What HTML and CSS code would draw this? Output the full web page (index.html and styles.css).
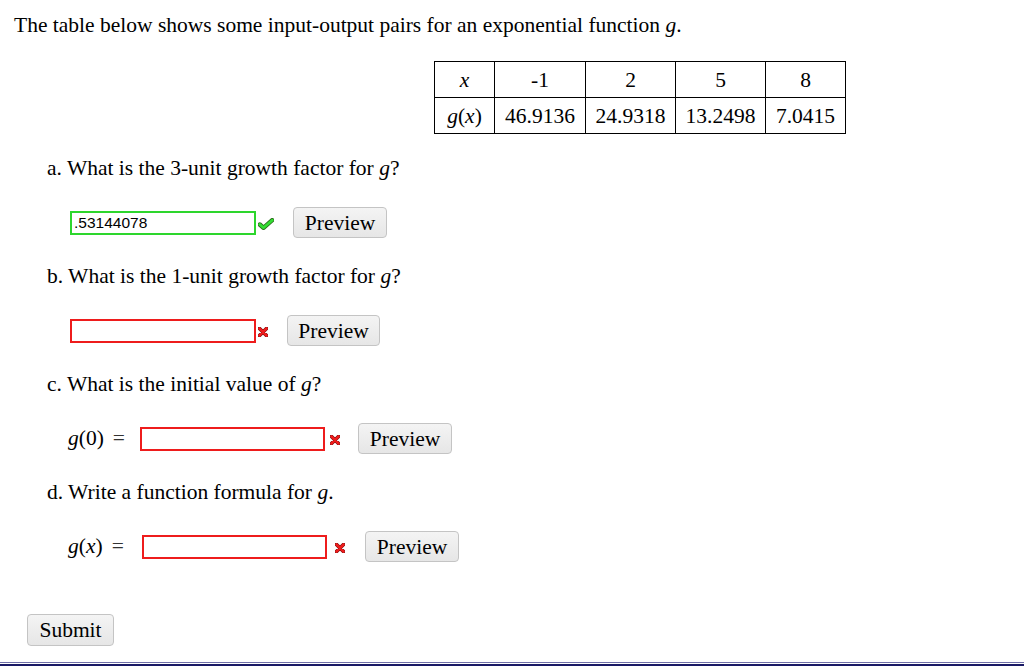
FILE: index.html
```html
<!DOCTYPE html>
<html>
<head>
<meta charset="utf-8">
<link rel="stylesheet" href="styles.css">
</head>
<body>
<div class="page">
  <p class="intro">The table below shows some input-output pairs for an exponential function <i class="m">g</i>.</p>
  <table class="data">
    <tr><td class="hd"><i class="m">x</i></td><td class="c1">-1</td><td class="c2">2</td><td class="c3">5</td><td class="c4">8</td></tr>
    <tr><td class="hd"><i class="m">g</i>(<i class="m">x</i>)</td><td>46.9136</td><td>24.9318</td><td>13.2498</td><td>7.0415</td></tr>
  </table>

  <div class="q">
    <p class="qtext">a. What is the 3-unit growth factor for <i class="m">g</i>?</p>
    <div class="ans">
      <input class="field ok" type="text" value=".53144078">
      <svg class="mark check" width="16" height="12" viewBox="0 0 16 12"><path d="M1.8 6.5 L5.5 9.8 L14.2 2.2" fill="none" stroke="#2a6a1a" stroke-width="4.4" stroke-linecap="round" stroke-linejoin="round"/><path d="M1.8 6.5 L5.5 9.8 L14.2 2.2" fill="none" stroke="#33dd33" stroke-width="2.8" stroke-linecap="round" stroke-linejoin="round"/></svg>
      <button class="btn prev-a">Preview</button>
    </div>
  </div>

  <div class="q">
    <p class="qtext">b. What is the 1-unit growth factor for <i class="m">g</i>?</p>
    <div class="ans">
      <input class="field bad" type="text">
      <svg class="mark cross" width="10" height="10" viewBox="0 0 10 10"><path d="M1.5 1.5 L8.5 8.5 M8.5 1.5 L1.5 8.5" stroke="#6a1010" stroke-width="3.8" stroke-linecap="round"/><path d="M1.5 1.5 L8.5 8.5 M8.5 1.5 L1.5 8.5" stroke="#ee1c1c" stroke-width="2.6" stroke-linecap="round"/></svg>
      <button class="btn prev-b">Preview</button>
    </div>
  </div>

  <div class="q">
    <p class="qtext">c. What is the initial value of <i class="m">g</i>?</p>
    <div class="ans math">
      <span class="lhs"><i class="m">g</i>(0)<span class="eq">=</span></span>
      <input class="field bad f-c" type="text">
      <svg class="mark cross cx" width="10" height="10" viewBox="0 0 10 10"><path d="M1.5 1.5 L8.5 8.5 M8.5 1.5 L1.5 8.5" stroke="#6a1010" stroke-width="3.8" stroke-linecap="round"/><path d="M1.5 1.5 L8.5 8.5 M8.5 1.5 L1.5 8.5" stroke="#ee1c1c" stroke-width="2.6" stroke-linecap="round"/></svg>
      <button class="btn prev-c">Preview</button>
    </div>
  </div>

  <div class="q">
    <p class="qtext">d. Write a function formula for <i class="m">g</i>.</p>
    <div class="ans math">
      <span class="lhs"><i class="m">g</i>(<i class="m">x</i>)<span class="eq">=</span></span>
      <input class="field bad f-d" type="text">
      <svg class="mark cross dx" width="10" height="10" viewBox="0 0 10 10"><path d="M1.5 1.5 L8.5 8.5 M8.5 1.5 L1.5 8.5" stroke="#6a1010" stroke-width="3.8" stroke-linecap="round"/><path d="M1.5 1.5 L8.5 8.5 M8.5 1.5 L1.5 8.5" stroke="#ee1c1c" stroke-width="2.6" stroke-linecap="round"/></svg>
      <button class="btn prev-d">Preview</button>
    </div>
  </div>

  <div class="submit-row"><button class="btn submit">Submit</button></div>
</div>
<div class="rule"></div>
</body>
</html>
```

FILE: styles.css
```css
html, body {
  margin: 0;
  padding: 0;
  background: #fff;
}
body {
  font-family: "Liberation Serif", "Times New Roman", serif;
  font-size: 21.5px;
  color: #000;
}
.page {
  padding: 13px 0 0 14px;
}
.m {
  font-family: "Liberation Serif", serif;
  font-style: italic;
}
.intro {
  margin: 0;
  line-height: 24px;
}
.data {
  border-collapse: collapse;
  margin: 24px 0 0 420px;
  font-size: 21.5px;
}
.data td {
  border: 1px solid #000;
  height: 35px;
  padding: 0;
  text-align: center;
  line-height: 24px;
}
.data td.hd { width: 59px; }
.data td.c1 { width: 90px; }
.data td.c2 { width: 89px; }
.data td.c3 { width: 89px; }
.data td.c4 { width: 79px; }
.q {
  padding-left: 33px;
}
.data + .q { margin-top: 22px; }
.qtext {
  margin: 0;
  line-height: 24px;
  height: 24px;
}
.ans {
  display: flex;
  align-items: center;
  height: 31px;
  margin: 27px 0 26px 23px;
}
.ans.math {
  margin-left: 21px;
}
.field {
  box-sizing: border-box;
  width: 186px;
  height: 24px;
  margin: 0;
  padding: 0 2px;
  font-family: "Liberation Sans", Arial, sans-serif;
  font-size: 15.5px;
  color: #000;
  background: #fff;
  outline: none;
}
.field.ok { border: 2px solid #2dd62d; }
.field.bad { border: 2px solid #ee1c1c; }
.mark { flex: none; }
.check { margin: 2px 0 0 2px; }
.cross { margin: 2px 0 0 2px; }
.btn {
  font-family: "Liberation Serif", "Times New Roman", serif;
  font-size: 21.5px;
  color: #000;
  background: linear-gradient(#f4f4f4, #e6e6e6);
  border: 1px solid #c4c4c4;
  border-radius: 4px;
  height: 31px;
  padding: 0;
  line-height: 28px;
}
.prev-a { margin-left: 19px; width: 94px; }
.prev-b { margin-left: 19px; width: 93px; }
.lhs {
  width: 72px;
  flex: none;
}
.eq { margin-left: 9px; color: #333; }
.f-c { width: 185px; }
.f-d { width: 185px; margin-left: 2px; }
.cx { margin-left: 5px; }
.dx { margin-left: 8px; }
.prev-c { margin-left: 18px; width: 94px; }
.prev-d { margin-left: 20px; width: 94px; }
.submit-row {
  padding-left: 13px;
  margin-top: 52px;
}
.submit {
  width: 87px;
  height: 32px;
}
.rule {
  margin-top: 16px;
  border-top: 1px solid #7070a8;
  height: 1px;
  border-bottom: 2px solid #1a1a66;
}
```
